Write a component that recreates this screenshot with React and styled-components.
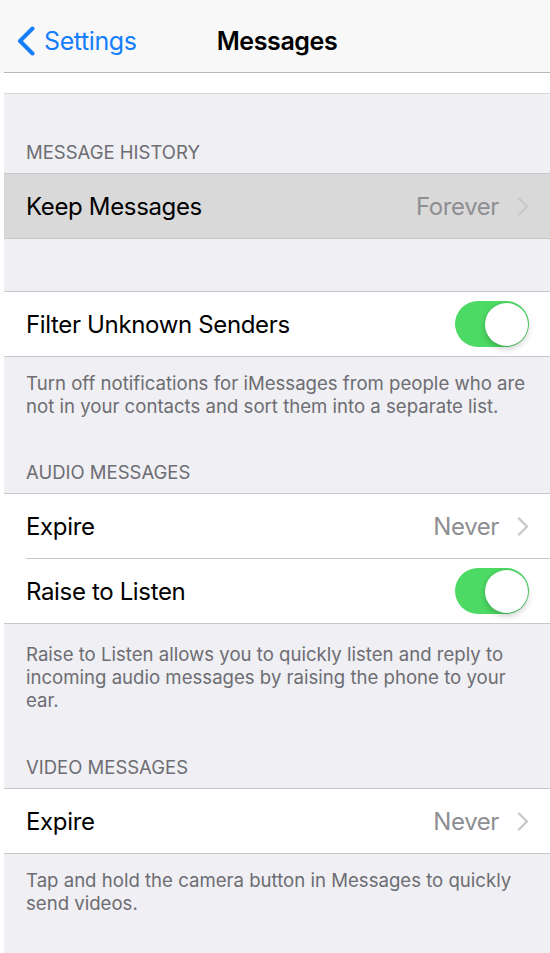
import styled, { createGlobalStyle } from 'styled-components';

const GlobalStyle = createGlobalStyle`
  html, body {
    margin: 0;
    padding: 0;
    background: #fff;
  }
  body {
    font-family: Inter, "Liberation Sans", sans-serif;
    -webkit-font-smoothing: antialiased;
  }
`;

const SECTIONS = [
  {
    header: 'MESSAGE HISTORY',
    top: 47,
    rows: [{ label: 'Keep Messages', value: 'Forever', pressed: true }],
  },
  {
    top: 52,
    rows: [{ label: 'Filter Unknown Senders', toggle: true }],
    footer: 'Turn off notifications for iMessages from people who are not in your contacts and sort them into a separate list.',
  },
  {
    header: 'AUDIO MESSAGES',
    rows: [
      { label: 'Expire', value: 'Never' },
      { label: 'Raise to Listen', toggle: true },
    ],
    footer: 'Raise to Listen allows you to quickly listen and reply to incoming audio messages by raising the phone to your ear.',
    footerTop: 19,
  },
  {
    header: 'VIDEO MESSAGES',
    top: 44,
    rows: [{ label: 'Expire', value: 'Never' }],
    footer: 'Tap and hold the camera button in Messages to quickly send videos.',
  },
];

const BackChevron = () => (
  <svg width="20" height="30" viewBox="0 0 20 30">
    <path d="M16.5 2.5 L4 15 L16.5 27.5" fill="none" stroke="#157efb" strokeWidth="4" strokeLinecap="round" strokeLinejoin="round" />
  </svg>
);

const Chevron = () => (
  <svg width="12" height="19" viewBox="0 0 12 19">
    <path d="M2 1.5 L10 9.5 L2 17.5" fill="none" stroke="#c7c7cc" strokeWidth="2.4" strokeLinecap="round" strokeLinejoin="round" />
  </svg>
);

const App = () => {
  return (
    <Page>
      <GlobalStyle />
      <NavBar>
        <BackButton>
          <BackChevron />
          <span>Settings</span>
        </BackButton>
        <Title>Messages</Title>
        <div />
      </NavBar>
      <WhiteBand />
      <Content>
        {SECTIONS.map((section, i) => (
          <section key={i}>
            {section.header ? (
              <Header $top={section.top || 43}>{section.header}</Header>
            ) : (
              <Spacer $height={section.top} />
            )}
            <Group>
              {section.rows.map((row, j) => (
                <Row key={j} $pressed={row.pressed} $last={j === section.rows.length - 1}>
                  <Label>{row.label}</Label>
                  {row.toggle ? (
                    <Toggle>
                      <Knob />
                    </Toggle>
                  ) : (
                    <Detail>
                      <Value>{row.value}</Value>
                      <Chevron />
                    </Detail>
                  )}
                </Row>
              ))}
            </Group>
            {section.footer && <Footer $top={section.footerTop || 15}>{section.footer}</Footer>}
          </section>
        ))}
      </Content>
    </Page>
  );
};

const Page = styled.div`
  min-height: 953px;
  padding-left: 4px;
  background: #fff;
  display: flex;
  flex-direction: column;
`;

const NavBar = styled.div`
  display: grid;
  grid-template-columns: 1fr auto 1fr;
  align-items: center;
  align-content: end;
  box-sizing: border-box;
  height: 73px;
  padding-bottom: 16px;
  background: #f8f8f8;
  box-shadow: -4px 0 0 #f8f8f8;
  border-bottom: 1px solid #b8b8bc;
`;

const BackButton = styled.div`
  display: flex;
  align-items: center;
  gap: 8px;
  padding-left: 12px;
  color: #157efb;
  font-size: 25px;
  letter-spacing: -0.4px;
  svg {
    display: block;
  }
`;

const Title = styled.div`
  color: #000;
  font-size: 25px;
  font-weight: 600;
  letter-spacing: -0.4px;
`;

const WhiteBand = styled.div`
  height: 20px;
  background: #fff;
`;

const Content = styled.div`
  flex: 1;
  background: #efeff4;
  border-top: 1px solid #d8d8dc;
  padding-bottom: 40px;
`;

const Header = styled.div`
  padding: ${p => p.$top}px 26px 9px 22px;
  color: #6d6d72;
  font-size: 18.5px;
  line-height: 23px;
`;

const Spacer = styled.div`
  height: ${p => p.$height}px;
`;

const Group = styled.div`
  background: #fff;
  border-top: 1px solid #c8c7cc;
  border-bottom: 1px solid #c8c7cc;
`;

const Row = styled.div`
  display: flex;
  align-items: center;
  justify-content: space-between;
  height: 64px;
  padding: 0 21px 0 22px;
  background: ${p => (p.$pressed ? '#d9d9d9' : '#fff')};
  position: relative;
  ${p =>
    !p.$last &&
    `
    &::after {
      content: '';
      position: absolute;
      left: 22px;
      right: 0;
      bottom: -1px;
      height: 1px;
      background: #c8c7cc;
      z-index: 1;
    }
    margin-bottom: 1px;
  `}
`;

const Label = styled.span`
  color: #000;
  font-size: 24px;
  letter-spacing: -0.35px;
`;

const Detail = styled.div`
  display: flex;
  align-items: center;
  gap: 18px;
  svg {
    display: block;
  }
`;

const Value = styled.span`
  color: #8e8e93;
  font-size: 24px;
  letter-spacing: -0.4px;
`;

const Toggle = styled.div`
  position: relative;
  width: 74px;
  height: 46px;
  border-radius: 23px;
  background: #4cd964;
`;

const Knob = styled.div`
  position: absolute;
  top: 1.5px;
  right: 1.5px;
  width: 43px;
  height: 43px;
  border-radius: 50%;
  background: #fff;
  box-shadow: 0 3px 6px rgba(0, 0, 0, 0.2), 0 0 0 0.5px rgba(0, 0, 0, 0.08);
`;

const Footer = styled.div`
  padding: ${p => p.$top}px 16px 0 22px;
  color: #6d6d72;
  font-size: 18.6px;
  line-height: 23px;
`;

export default App;
